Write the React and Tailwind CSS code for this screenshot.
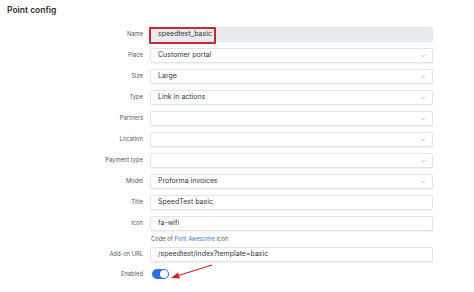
import { ChevronDown } from "lucide-react";

const rows = [
  { label: "Name", value: "speedtest_basic", kind: "readonly" },
  { label: "Place", value: "Customer portal", kind: "select" },
  { label: "Size", value: "Large", kind: "select" },
  { label: "Type", value: "Link in actions", kind: "select" },
  { label: "Partners", value: "", kind: "select" },
  { label: "Location", value: "", kind: "select" },
  { label: "Payment type", value: "", kind: "select" },
  { label: "Model", value: "Proforma invoices", kind: "select" },
  { label: "Title", value: "SpeedTest basic", kind: "text" },
  { label: "Icon", value: "fa-wifi", kind: "text" },
];

function Field({ value, kind, children }) {
  const base =
    "relative flex items-center h-[15px] w-[283px] rounded-[2px] border px-[7px] text-[7px] text-[#343a40]";
  const tone =
    kind === "readonly"
      ? "bg-[#e9ecef] border-[#e3e6ea]"
      : "bg-white border-[#e2e5e8] shadow-[0_1px_1px_rgba(0,0,0,0.05)]";
  return (
    <div className={`${base} ${tone}`}>
      <span className="truncate">{value}</span>
      {kind === "select" && (
        <ChevronDown className="absolute right-[6px] top-[4px] w-[6px] h-[6px] text-[#9aa0a6]" strokeWidth={2.5} />
      )}
      {children}
    </div>
  );
}

function Row({ label, children }) {
  return (
    <div className="flex items-center">
      <div className="w-[143px] text-right text-[5.8px] text-[#555b61]">{label}</div>
      <div className="ml-[7px]">{children}</div>
    </div>
  );
}

export default function App() {
  return (
    <div
      className="relative w-[474px] h-[292px] bg-white overflow-hidden"
      style={{ fontFamily: "Inter, 'Noto Sans', sans-serif" }}
    >
      <div className="pt-[4px] pl-[7px] text-[8.5px] font-semibold text-[#2b2f33] leading-[13px]">Point config</div>

      <div className="mt-[10px] flex flex-col gap-[6px]">
        {rows.map((r) => (
          <Row key={r.label} label={r.label}>
            <Field value={r.value} kind={r.kind}>
              {r.kind === "readonly" && (
                <div className="absolute left-[-2px] top-[-1px] h-[17px] w-[67px] border-2 border-[#c62a35] rounded-[1px]" />
              )}
            </Field>
          </Row>
        ))}
      </div>

      <div className="ml-[151px] mt-[3px] text-[5.8px] text-[#555b61] leading-[10px]">
        Code of <span className="text-[#3b7ddd]">Font Awesome</span> icon
      </div>

      <div className="mt-[3px]">
        <Row label="Add-on URL">
          <Field value="/speedtest/index?template=basic" kind="text" />
        </Row>
      </div>

      <div className="mt-[7px] flex items-center">
        <div className="w-[143px] text-right text-[5.8px] text-[#555b61]">Enabled</div>
        <div className="ml-[9px] flex items-center justify-end w-[17px] h-[10px] rounded-full bg-[#2f6fde] px-[1px]">
          <div className="w-[8px] h-[8px] rounded-full bg-white" />
        </div>
      </div>

      <svg className="absolute left-[168px] top-[262px]" width="48" height="20" viewBox="0 0 48 20">
        <line x1="44" y1="3" x2="9" y2="14" stroke="#c8202f" strokeWidth="1.2" />
        <polygon points="3,16 10,10.5 12,16.5" fill="#c8202f" />
      </svg>
    </div>
  );
}
